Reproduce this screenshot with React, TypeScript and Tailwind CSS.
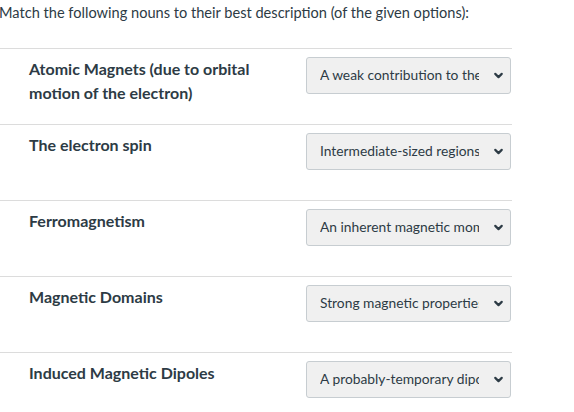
import { ChevronDown } from 'lucide-react'

const rows = [
  { label: 'Atomic Magnets (due to orbital motion of the electron)', value: 'A weak contribution to the' },
  { label: 'The electron spin', value: 'Intermediate-sized regions' },
  { label: 'Ferromagnetism', value: 'An inherent magnetic mom' },
  { label: 'Magnetic Domains', value: 'Strong magnetic properties' },
  { label: 'Induced Magnetic Dipoles', value: 'A probably-temporary dipo' },
]

export default function App() {
  return (
    <div className="w-[512px] bg-white text-[#2d3b45] font-['Lato',sans-serif]">
      <div className="h-12 pt-[2px] text-[14.6px] leading-[22px] -ml-[1px] whitespace-nowrap">
        Match the following nouns to their best description (of the given options):
      </div>
      {rows.map((row) => (
        <div key={row.label} className="flex h-[76px] border-t border-[#dcdcdc]">
          <div className="w-[306px] pl-[29px] pt-[8px] pr-10 font-bold text-[16px] leading-[24px]">
            {row.label}
          </div>
          <div className="pt-2">
            <div className="flex items-center w-[205px] h-[37px] pl-[13px] pr-[5px] bg-[#f0f0f0] border border-[#c7cdd1] rounded-[3px] text-[13.8px]">
              <span className="w-[163px] overflow-hidden whitespace-nowrap">{row.value}</span>
              <ChevronDown className="w-[13px] h-[13px] ml-[13px] shrink-0" strokeWidth={4} />
            </div>
          </div>
        </div>
      ))}
    </div>
  )
}
